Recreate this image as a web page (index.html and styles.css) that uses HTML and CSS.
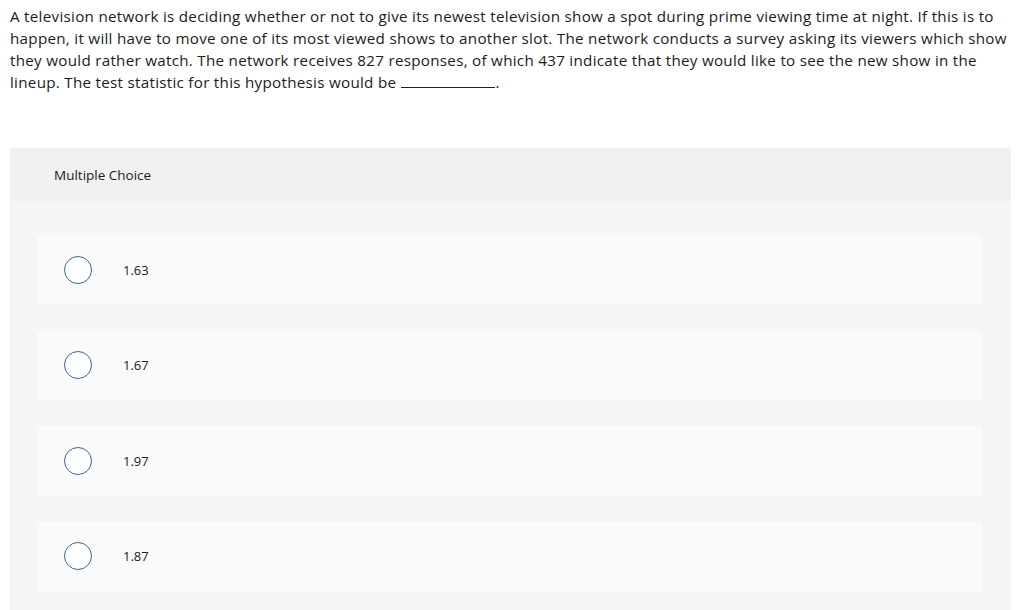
FILE: index.html
```html
<!DOCTYPE html>
<html>
<head>
<meta charset="utf-8">
<link rel="stylesheet" href="styles.css">
</head>
<body>
<div class="page">
  <p class="question">A television network is deciding whether or not to give its newest television show a spot during prime viewing time at night. If this is to happen, it will have to move one of its most viewed shows to another slot. The network conducts a survey asking its viewers which show they would rather watch. The network receives 827 responses, of which 437 indicate that they would like to see the new show in the lineup. The test statistic for this hypothesis would be <span class="blank"></span>.</p>
  <div class="panel">
    <div class="panel-head">Multiple Choice</div>
    <div class="panel-body">
      <div class="option"><span class="radio"></span><span class="label">1.63</span></div>
      <div class="option"><span class="radio"></span><span class="label">1.67</span></div>
      <div class="option"><span class="radio"></span><span class="label">1.97</span></div>
      <div class="option"><span class="radio"></span><span class="label">1.87</span></div>
    </div>
  </div>
</div>
</body>
</html>
```
FILE: styles.css
```css
html, body { margin: 0; padding: 0; background: #fff; }
body { font-family: "Open Sans", Lato, sans-serif; color: #1c1c1c; }
.page { padding: 5px 10px 0 10px; }
.question { margin: 0; font-size: 15.2px; line-height: 22px; letter-spacing: 0.28px; }
.blank { display: inline-block; width: 94px; border-bottom: 1px solid #222; height: 1px; vertical-align: baseline; margin-right: 1px; }
.panel { margin-top: 55px; width: 1001px; }
.panel-head { background: #f1f1f1; height: 53px; display: flex; align-items: center; padding-left: 44px; font-size: 13.5px; border-radius: 3px 3px 0 0; }
.panel-body { background: #f5f5f5; padding: 34px 29px 20px 27px; display: flex; flex-direction: column; gap: 26.5px; }
.option { background: #fafafa; height: 69px; border-radius: 3px; display: flex; align-items: center; padding-left: 27px; }
.radio { width: 28px; height: 28px; border: 1.3px solid #3e6496; border-radius: 50%; background: #fff; box-sizing: border-box; flex: none; }
.label { margin-left: 31px; font-size: 13px; color: #222; }
```
